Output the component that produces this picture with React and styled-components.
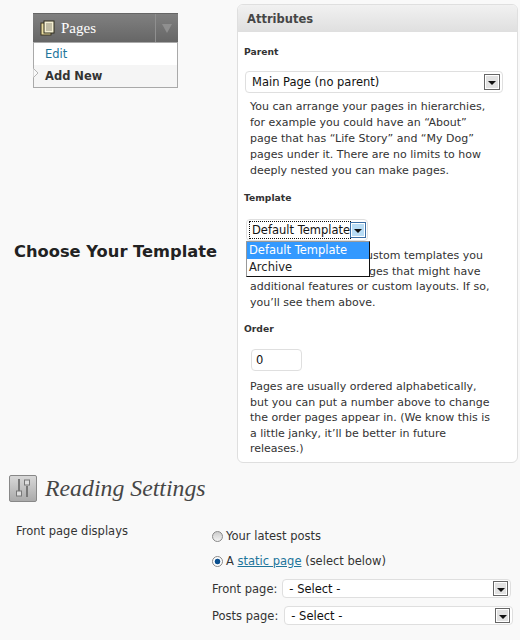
import React from "react";
import styled, { createGlobalStyle } from "styled-components";

const Global = createGlobalStyle`
  html, body { margin: 0; padding: 0; background: #f9f9f9; }
  body { width: 520px; height: 640px; overflow: hidden; font-family: "DejaVu Sans", Verdana, sans-serif; color: #333; }
`;
const Page = styled.div`width: 520px; height: 640px; display: flex; flex-direction: column; overflow: hidden;`;
const Top = styled.div`display: flex; align-items: flex-start; height: 465px;`;
const LeftCol = styled.div`width: 237px; flex: none; display: flex; flex-direction: column; padding-top: 13px;`;
const Menu = styled.div`margin-left: 33px; width: 145px; box-sizing: border-box; border: 1px solid #a9a9a9; border-top: none; background: #fff; position: relative;`;
const MenuHead = styled.div`
  margin: 0 -1px; height: 30px; display: flex; align-items: center;
  background: linear-gradient(#808080, #666); border-top: 1px solid #666; border-bottom: 1px solid #aaa; box-sizing: border-box;
`;
const MenuTitle = styled.div`
  flex: 1; display: flex; align-items: center; gap: 6px; padding-left: 7px; height: 100%;
  font-family: "Liberation Serif", serif; font-size: 15px; color: #fff; border-right: 1px solid #8f8f8f;
`;
const MenuToggle = styled.div`width: 22px; height: 100%; display: flex; align-items: center; justify-content: center;`;
const MenuItem = styled.div`
  height: ${p => p.$h}px; box-sizing: border-box; padding-left: 11px; display: flex; align-items: center; font-size: 11.5px;
  color: ${p => p.$active ? "#333" : "#21759b"}; font-weight: ${p => p.$active ? 700 : 400};
  background: ${p => p.$active ? "#f5f5f5" : "#fff"};
`;
const Notch = styled.svg`position: absolute; left: -1px; bottom: 9px;`;
const Choose = styled.h2`margin: 152px 0 0 14px; font-size: 16.3px; line-height: 24px; font-weight: 700; color: #222; white-space: nowrap;`;
const Panel = styled.div`
  margin-top: 4px; width: 281px; height: 459px; box-sizing: border-box; background: #fff; border: 1px solid #dfdfdf; border-radius: 6px; overflow: visible; position: relative;
`;
const PanelHead = styled.div`
  height: 27px; padding-left: 9px; display: flex; align-items: center; font-size: 11.5px; font-weight: 700; color: #464646;
  background: linear-gradient(#f1f1f1, #dfdfdf); border-radius: 5px 5px 0 0;
`;
const PanelBody = styled.div`padding: 0 6px; display: flex; flex-direction: column;`;
const Label = styled.div`font-size: 9.2px; line-height: 12px; font-weight: 700; color: #333; margin-top: ${p => p.$mt}px;`;
const Help = styled.p`margin: ${p => p.$mt}px 6px 0 6px; font-size: 11px; line-height: ${p => p.$lh}px; color: #333; white-space: nowrap;`;
const Select = styled.div`
  box-sizing: border-box; width: ${p => p.$w}px; height: ${p => p.$h || 22}px; margin: ${p => p.$m || 0}; background: #fff; border: 1px solid #dfdfdf; border-radius: 4px;
  display: flex; align-items: center; justify-content: space-between; padding: 0 2px 0 ${p => p.$pl || 6}px; font-size: 11.5px; color: #111; white-space: nowrap; flex: none;
`;
const Arrow = styled.span`
  width: ${p => p.$size || 16}px; height: ${p => p.$size || 16}px; box-sizing: border-box; flex: none; border: 1px solid ${p => p.$focus ? "#3a6ea5" : "#666"};
  background: ${p => p.$focus ? "#b8dcf5" : "#e2e2e2"}; display: flex; align-items: center; justify-content: center; box-shadow: inset 0 0 0 1px #fff;
`;
const Caret = styled.i`width: 0; height: 0; margin-top: 2px; border: 4px solid transparent; border-bottom: 0; border-top: 4px solid #111;`;
const Focus = styled.span`outline: 1px dotted #111; padding: 1px 0 1px 2px; margin-left: -2px; line-height: 14px;`;
const Dropdown = styled.div`
  position: absolute; left: 8px; top: 236px; width: 124px; height: 36px; box-sizing: border-box; background: #fff;
  border: 1px solid #111; border-left-color: #999; border-top-color: #999; font-size: 11.5px; color: #222; z-index: 2;
`;
const Option = styled.div`height: 17px; line-height: 17px; padding-left: 2px; background: ${p => p.$on ? "#3399ff" : "transparent"}; color: ${p => p.$on ? "#fff" : "#222"};`;
const Order = styled.div`box-sizing: border-box; width: 51px; height: 22px; margin: 14px 0 0 7px; border: 1px solid #dfdfdf; border-radius: 4px; background: #fff; padding-left: 4px; display: flex; align-items: center; font-size: 11.5px; color: #111;`;
const Hidden = styled.span`visibility: hidden;`;
const Reading = styled.section`display: flex; flex-direction: column; padding-left: 9px;`;
const Heading = styled.div`display: flex; align-items: center; gap: 8px; margin-top: 9px; height: 28px;`;
const IconBox = styled.div`width: 28px; height: 27px; box-sizing: border-box; border: 1px solid #888; border-radius: 2px; background: linear-gradient(#d8d8d8, #aaa); display: flex; align-items: center; justify-content: center;`;
const H1 = styled.h1`margin: 0; font-family: "Liberation Serif", serif; font-style: italic; font-weight: 400; font-size: 23.8px; color: #464646; white-space: nowrap;`;
const Row = styled.div`display: flex; padding-left: 7px;`;
const RowLabel = styled.div`width: 196px; flex: none; font-size: 11.5px; line-height: 14px; margin-top: 22px; color: #333;`;
const Options = styled.div`display: flex; flex-direction: column; margin-top: 27px;`;
const RadioRow = styled.div`display: flex; align-items: center; gap: 3px; font-size: 11.5px; height: 14px; margin-bottom: ${p => p.$mb}px; color: #333; white-space: pre;`;
const Radio = styled.i`
  width: 11px; height: 11px; border-radius: 50%; box-sizing: border-box; border: 1px solid #888; display: block; flex: none;
  background: ${p => p.$on ? "radial-gradient(circle, #0a4f8f 0 2.5px, #fff 3.2px)" : "linear-gradient(#ccc, #f2f2f2)"};
`;
const Link = styled.a`color: #21759b; text-decoration: underline;`;
const SelectRow = styled.div`display: flex; align-items: center; gap: 5px; font-size: 11.5px; color: #333; margin-bottom: 8px; white-space: nowrap;`;

export default function App() {
  return (
    <Page>
      <Global />
      <Top>
        <LeftCol>
          <Menu>
            <MenuHead>
              <MenuTitle>
                <svg width="15" height="16" viewBox="0 0 15 16">
                  <rect x="1" y="3" width="10" height="12" fill="#e9dca0" stroke="#3a3520" />
                  <rect x="4" y="1" width="10" height="12" fill="#f4efd2" stroke="#2f2c1c" />
                  <path d="M6 4h6M6 6h6M6 8h6M6 10h6" stroke="#8d8a76" />
                </svg>
                Pages
              </MenuTitle>
              <MenuToggle>
                <svg width="10" height="9" viewBox="0 0 10 9"><path d="M0 0h10L5 9z" fill="#8f8f8f" /></svg>
              </MenuToggle>
            </MenuHead>
            <MenuItem $h={22}>Edit</MenuItem>
            <MenuItem $h={22} $active>Add New</MenuItem>
            <Notch width="6" height="10" viewBox="0 0 6 10"><path d="M0 0l5 5-5 5z" fill="#f9f9f9" stroke="#b5b5b5" /></Notch>
          </Menu>
          <Choose>Choose Your Template</Choose>
        </LeftCol>
        <Panel>
          <PanelHead>Attributes</PanelHead>
          <PanelBody>
            <Label $mt={14}>Parent</Label>
            <Select $w={258} $m="13px 0 0 1px"><span>Main Page (no parent)</span><Arrow><Caret /></Arrow></Select>
            <Help $mt={6} $lh={16}>You can arrange your pages in hierarchies,<br />for example you could have an “About”<br />page that has “Life Story” and “My Dog”<br />pages under it. There are no limits to how<br />deeply nested you can make pages.</Help>
            <Label $mt={13}>Template</Label>
            <Select $w={122} $m="15px 0 0 2px" $pl={5}><Focus>Default Template</Focus><Arrow $focus><Caret /></Arrow></Select>
            <Help $mt={7} $lh={15.5}><Hidden>Some themes have</Hidden> custom templates you<br /><Hidden>can use on certain p</Hidden>ages that might have<br />additional features or custom layouts. If so,<br />you’ll see them above.</Help>
            <Label $mt={13}>Order</Label>
            <Order>0</Order>
            <Help $mt={8} $lh={15.5}>Pages are usually ordered alphabetically,<br />but you can put a number above to change<br />the order pages appear in. (We know this is<br />a little janky, it’ll be better in future<br />releases.)</Help>
          </PanelBody>
          <Dropdown>
            <Option $on>Default Template</Option>
            <Option>Archive</Option>
          </Dropdown>
        </Panel>
      </Top>
      <Reading>
        <Heading>
          <IconBox>
            <svg width="20" height="20" viewBox="0 0 20 20" fill="none" stroke="#777">
              <path d="M6 1v12M14 8v11" strokeWidth="2" />
              <rect x="3.5" y="13" width="5" height="5" fill="#ddd" />
              <rect x="11.5" y="2" width="5" height="5" fill="#ddd" />
            </svg>
          </IconBox>
          <H1>Reading Settings</H1>
        </Heading>
        <Row>
          <RowLabel>Front page displays</RowLabel>
          <Options>
            <RadioRow $mb={11}><Radio />Your latest posts</RadioRow>
            <RadioRow $mb={11}><Radio $on /><span>A <Link>static page</Link> (select below)</span></RadioRow>
            <SelectRow>Front page:<Select $w={229} $h={19}><span>- Select -</span><Arrow $size={15}><Caret /></Arrow></Select></SelectRow>
            <SelectRow>Posts page:<Select $w={229} $h={19} $m="0 0 0 1px"><span>- Select -</span><Arrow $size={15}><Caret /></Arrow></Select></SelectRow>
          </Options>
        </Row>
      </Reading>
    </Page>
  );
}
